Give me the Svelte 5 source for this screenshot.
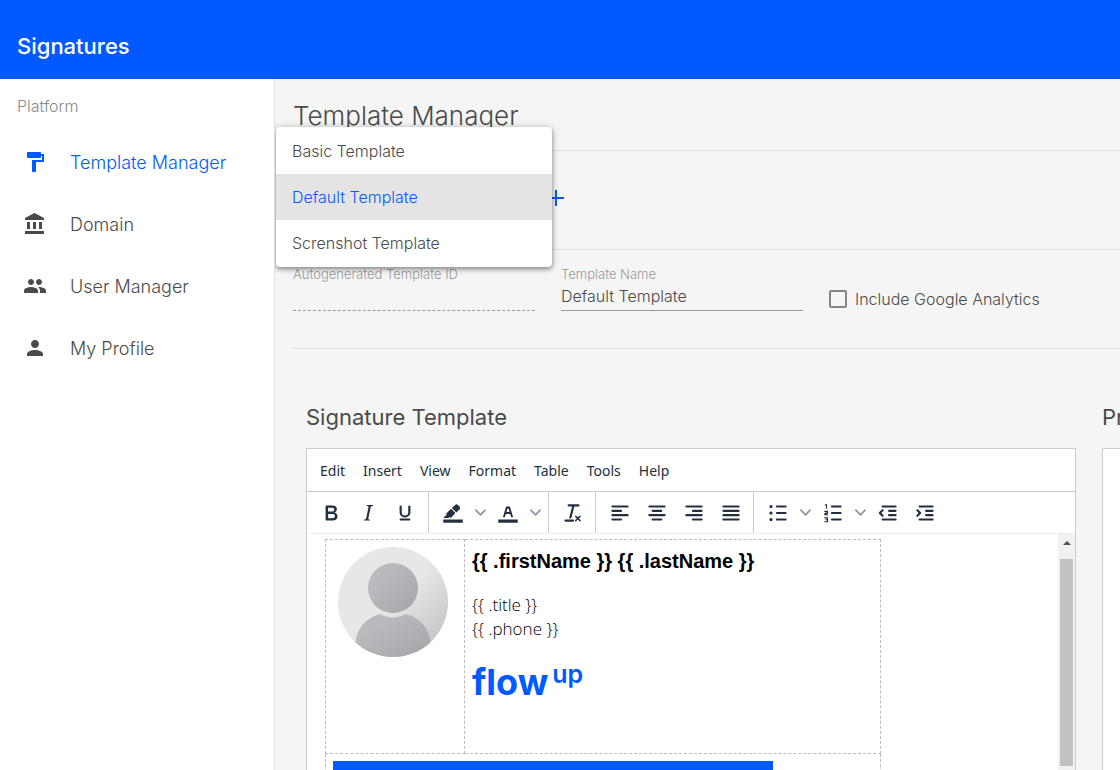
<script lang="ts">
  type Icon = { fill?: string; stroke?: string; bar?: boolean }
  type Tool = { label: string; icon: Icon; split?: boolean }

  const nav = [
    { label: 'Template Manager', icon: 'M18 4V3c0-.55-.45-1-1-1H5c-.55 0-1 .45-1 1v4c0 .55.45 1 1 1h12c.55 0 1-.45 1-1V6h1v4H9v11c0 .55.45 1 1 1h2c.55 0 1-.45 1-1v-9h8V4h-3z' },
    { label: 'Domain', icon: 'M4 10v7h3v-7H4zm6 0v7h3v-7h-3zM2 22h19v-3H2v3zm14-12v7h3v-7h-3zm-4.500-9L2 6v2h19V6l-9.500-5z' },
    { label: 'User Manager', icon: 'M16 11c1.660 0 2.990-1.340 2.990-3S17.660 5 16 5s-3 1.340-3 3 1.340 3 3 3zm-8 0c1.660 0 2.990-1.340 2.990-3S9.660 5 8 5 5 6.340 5 8s1.340 3 3 3zm0 2c-2.330 0-7 1.170-7 3.500V19h14v-2.500c0-2.330-4.670-3.500-7-3.500zm8 0c-.29 0-.62.02-.97.05 1.160.84 1.970 1.970 1.970 3.450V19h6v-2.500c0-2.330-4.670-3.500-7-3.500z' },
    { label: 'My Profile', icon: 'M12 12c2.210 0 4-1.790 4-4s-1.790-4-4-4-4 1.790-4 4 1.790 4 4 4zm0 2c-2.670 0-8 1.340-8 4v2h16v-2c0-2.660-5.330-4-8-4z' },
  ]

  const templates = ['Basic Template', 'Default Template', 'Screnshot Template']
  const menus = ['Edit', 'Insert', 'View', 'Format', 'Table', 'Tools', 'Help']

  const toolGroups: Tool[][] = [
    [
      { label: 'Bold', icon: { fill: 'M7.8 19c-.3 0-.5 0-.6-.2l-.2-.5V5.700c0-.2 0-.4.2-.5l.6-.2h5c1.500 0 2.700.3 3.500 1 .7.6 1.100 1.400 1.100 2.500a3 3 0 0 1-.6 1.900c-.4.6-1 1-1.600 1.200.4.1.9.3 1.300.6s.8.7 1 1.200c.4.4.5 1 .5 1.600 0 1.300-.4 2.300-1.300 3-.8.7-2.100 1-3.800 1H7.800zm5-8.300c.6 0 1.200-.1 1.600-.5.4-.3.6-.7.6-1.300 0-1.100-.8-1.700-2.300-1.700H9.300v3.500h3.400zm.5 6c.7 0 1.300-.1 1.700-.4.4-.4.6-.9.6-1.500s-.2-1-.7-1.400c-.4-.3-1-.4-2-.4H9.400v3.800h4z' } },
      { label: 'Italic', icon: { fill: 'M16.7 4.7l-.1.9h-.3c-.6 0-1 0-1.400.3-.3.3-.4.6-.5 1.100l-2.100 9.800v.6c0 .5.4.8 1.400.8h.2l-.2.8H8l.2-.8h.2c1.100 0 1.800-.5 2-1.500l2-9.800.1-.5c0-.6-.4-.8-1.400-.8h-.3l.2-.9h5.800z' } },
      { label: 'Underline', icon: { stroke: 'M8 6v5.500a4 3.700 0 0 0 8 0V6M8 18h8' } },
    ],
    [
      { label: 'Background color', split: true, icon: { bar: true, fill: 'M7.700 16.700H3l3.300-3.300-.7-.8L10.200 8l4 4.100-4 4.200c-.2.2-.6.2-.8 0l-.6-.7-1.100 1.100zm5-7.500L11 7.400l3-2.900a2 2 0 0 1 2.600 0L18 6c.7.7.7 2 0 2.700l-2.900 2.900-1.800-1.800-.5-.6z' } },
      { label: 'Text color', split: true, icon: { bar: true, fill: 'M8.700 16h-.8a.5.5 0 0 1-.5-.6l2.700-9c.1-.3.3-.4.5-.4h2.800c.2 0 .4.1.5.4l2.700 9a.5.5 0 0 1-.5.6h-.8a.5.5 0 0 1-.4-.4l-.7-2.200c0-.3-.3-.4-.5-.4h-3.400c-.2 0-.4.1-.5.4l-.7 2.200c0 .3-.2.4-.4.4zm2.600-7.600l-.6 2a.5.5 0 0 0 .5.6h1.600a.5.5 0 0 0 .5-.6l-.6-2c0-.3-.3-.4-.5-.4h-.4c-.2 0-.4.1-.5.4z' } },
    ],
    [
      { label: 'Clear formatting', icon: { fill: 'M13.200 6a1 1 0 0 1 0 .2l-2.600 10a1 1 0 0 1-1 .8h-.2a.8.8 0 0 1-.8-1l2.600-10H8a1 1 0 1 1 0-2h9a1 1 0 0 1 0 2h-3.800zM5 18h7a1 1 0 0 1 0 2H5a1 1 0 0 1 0-2zm13 1.500L16.500 18 15 19.500a.7.7 0 0 1-1-1l1.500-1.500-1.500-1.500a.7.7 0 0 1 1-1l1.500 1.500 1.500-1.500a.7.7 0 0 1 1 1L17.500 17l1.500 1.500a.7.7 0 0 1-1 1z' } },
    ],
    [
      { label: 'Align left', icon: { stroke: 'M5 6h14M5 10h8M5 14h14M5 18h8' } },
      { label: 'Align center', icon: { stroke: 'M5 6h14M8 10h8M5 14h14M8 18h8' } },
      { label: 'Align right', icon: { stroke: 'M5 6h14M11 10h8M5 14h14M11 18h8' } },
      { label: 'Justify', icon: { stroke: 'M5 6h14M5 10h14M5 14h14M5 18h14' } },
    ],
    [
      { label: 'Bullet list', split: true, icon: { stroke: 'M11 6h8M11 12h8M11 18h8', fill: 'M4 6a1.500 1.500 0 1 1 3 0a1.500 1.500 0 1 1-3 0zM4 12a1.500 1.500 0 1 1 3 0a1.500 1.500 0 1 1-3 0zM4 18a1.500 1.500 0 1 1 3 0a1.500 1.500 0 1 1-3 0z' } },
      { label: 'Numbered list', split: true, icon: { stroke: 'M11 6h8M11 12h8M11 18h8', fill: 'M4.500 4H6.500v4H5.500V5h-1zM4 10h3.500v2.500L5.500 13.200h2V14H4v-2l2.500-.7V11H4zM4 16h3.500v4.500H4v-1h2.500v-.8H5v-.9h1.500V17H4z' } },
      { label: 'Decrease indent', icon: { stroke: 'M7 6h12M13 10h6M13 14h6M7 18h12M7 9.500L4.500 12 7 14.500' } },
      { label: 'Increase indent', icon: { stroke: 'M7 6h12M13 10h6M13 14h6M7 18h12M5 9.500L7.500 12 5 14.500' } },
    ],
  ]

  let page = $state('Template Manager')
  let selected = $state('Default Template')
  let templateName = $state('Default Template')
  let templateId = $state('')
  let analytics = $state(false)
</script>

<div class="app">
  <header class="topbar">
    <h1>Signatures</h1>
  </header>

  <div class="body">
    <nav class="sidebar" aria-label="Platform">
      <p class="nav-title">Platform</p>
      {#each nav as item}
        <a href="#{item.label}" class="nav-item" class:active={item.label === page} onclick={() => (page = item.label)}>
          <svg viewBox="0 0 24 24" width="24" height="24" aria-hidden="true"><path d={item.icon} /></svg>
          <span>{item.label}</span>
        </a>
      {/each}
    </nav>

    <main>
      <section class="row heading">
        <h2>Template Manager</h2>
      </section>

      <section class="row picker">
        <div class="select-wrap">
          <select bind:value={selected} aria-label="Template">
            {#each templates as name}
              <option value={name}>{name}</option>
            {/each}
          </select>
          <div class="options" role="listbox" aria-label="Templates">
            {#each templates as name}
              <button type="button" role="option" aria-selected={name === selected} class:selected={name === selected} onclick={() => (selected = name)}>{name}</button>
            {/each}
          </div>
        </div>
        <button type="button" class="add" aria-label="Add template">
          <svg viewBox="0 0 24 24" width="24" height="24" aria-hidden="true"><path d="M11 4h2v7h7v2h-7v7h-2v-7H4v-2h7z" /></svg>
        </button>
      </section>

      <section class="row fields">
        <div class="field">
          <label for="template-id">Autogenerated Template ID</label>
          <input id="template-id" class="readonly" type="text" bind:value={templateId} readonly />
        </div>
        <div class="field">
          <label for="template-name">Template Name</label>
          <input id="template-name" type="text" bind:value={templateName} />
        </div>
        <label class="check">
          <input type="checkbox" bind:checked={analytics} />
          <span>Include Google Analytics</span>
        </label>
      </section>

      <div class="panels">
        <section class="panel">
          <h3>Signature Template</h3>
          <div class="editor">
            <div class="menubar">
              {#each menus as menu}
                <button type="button">{menu}</button>
              {/each}
            </div>
            <div class="toolbar">
              {#each toolGroups as group}
                <div class="group">
                  {#each group as tool}
                    <button type="button" class="tool" aria-label={tool.label}>
                      <svg viewBox="0 0 24 24" width="26" height="26" aria-hidden="true">
                        {#if tool.icon.bar}<path d="M3 18h18v3H3z" />{/if}
                        {#if tool.icon.fill}<path fill-rule="evenodd" d={tool.icon.fill} />{/if}
                        {#if tool.icon.stroke}<path class="line" d={tool.icon.stroke} />{/if}
                      </svg>
                    </button>
                    {#if tool.split}
                      <button type="button" class="chevron" aria-label="{tool.label} options">
                        <svg viewBox="0 0 10 10" width="11" height="11" aria-hidden="true"><path d="M8.700 2.200c.3-.3.8-.3 1 0 .4.4.4.9 0 1.200L5.700 7.800c-.3.3-.9.3-1.200 0L.2 3.400a.8.8 0 0 1 0-1.200c.3-.3.8-.3 1.100 0L5 6l3.700-3.800z" /></svg>
                      </button>
                    {/if}
                  {/each}
                </div>
              {/each}
            </div>
            <div class="edit-area">
              <div class="document">
                <table>
                  <tbody>
                    <tr>
                      <td class="photo">
                        <svg viewBox="0 0 110 110" width="110" height="110" role="img" aria-label="Avatar">
                          <defs>
                            <linearGradient id="back" x1="0" y1="0" x2="1" y2="1">
                              <stop offset="0.5" stop-color="#e6e7e8" />
                              <stop offset="0.9" stop-color="#c4c5c8" />
                            </linearGradient>
                            <linearGradient id="person" x1="0" y1="0" x2="1" y2="1">
                              <stop offset="0.3" stop-color="#b9babd" />
                              <stop offset="1" stop-color="#a3a4a8" />
                            </linearGradient>
                            <clipPath id="disc"><circle cx="55" cy="55" r="55" /></clipPath>
                          </defs>
                          <g clip-path="url(#disc)">
                            <rect width="110" height="110" fill="url(#back)" />
                            <circle cx="55" cy="41" r="25" fill="url(#person)" />
                            <path d="M42 67c8 4.500 18 4.500 26 0 15 4 23 15 24.500 28v15h-75V95C19 82 27 71 42 67z" fill="url(#person)" />
                          </g>
                        </svg>
                      </td>
                      <td class="details">
                        <p class="person">{'{{ .firstName }} {{ .lastName }}'}</p>
                        <p class="contact">{'{{ .title }}'}<br />{'{{ .phone }}'}</p>
                        <p class="logo">flow<span>up</span></p>
                      </td>
                    </tr>
                    <tr>
                      <td class="banner" colspan="2"><div></div></td>
                    </tr>
                  </tbody>
                </table>
              </div>
              <div class="scrollbar" aria-hidden="true">
                <div class="arrow"></div>
                <div class="thumb"></div>
              </div>
            </div>
          </div>
        </section>

        <section class="panel">
          <h3>Preview</h3>
          <div class="editor"></div>
        </section>
      </div>
    </main>
  </div>
</div>

<style>
  :global(body) { margin: 0; }
  .app { --blue: #005aff; --ink: #4a4a4a; --rule: #dcdcdc; --tool: #222f3e; display: flex; flex-direction: column; height: 100vh; overflow: hidden; font-family: Inter, "Liberation Sans", sans-serif; font-weight: 300; font-size: 16px; color: var(--ink); }
  .app * { box-sizing: border-box; }
  h1, h2, h3, p { margin: 0; }
  button { padding: 0; border: 0; background: none; font: inherit; color: inherit; cursor: pointer; }
  svg { display: block; fill: currentColor; }

  .topbar { flex: none; padding: 32px 17px 19px; background: var(--blue); color: #fff; }
  h1 { font-size: 22px; line-height: 28px; font-weight: 500; }
  .body { display: flex; flex: 1; min-height: 0; }

  .sidebar { flex: none; width: 275px; padding-top: 17px; border-right: 1px solid #e0e0e0; background: #fff; }
  .nav-title { padding: 0 17px; margin-bottom: 15px; line-height: 20px; color: #8a8a8a; }
  .nav-item { display: flex; align-items: center; gap: 23px; height: 62px; padding: 0 23px; font-size: 18px; color: var(--ink); text-decoration: none; }
  .nav-item.active { color: var(--blue); }

  main { display: flex; flex-direction: column; flex: 1; min-width: 0; padding-left: 18px; overflow: hidden; background: #f5f5f5; }
  .row { flex: none; border-bottom: 1px solid var(--rule); }
  .heading { height: 72px; padding-top: 21px; }
  h2 { font-size: 26px; line-height: 32px; font-weight: 300; }

  .picker { display: flex; align-items: center; gap: 9px; height: 99px; padding-bottom: 4px; }
  .select-wrap { position: relative; width: 242px; }
  select { width: 100%; height: 46px; border: 0; border-bottom: 1px solid #999; background: none; font: inherit; color: inherit; }
  .options { position: absolute; top: -48px; left: -17px; z-index: 2; display: flex; flex-direction: column; width: 276px; padding: 1px 0; border-radius: 4px; background: #fff; overflow: hidden; box-shadow: 0 2px 4px rgba(0, 0, 0, 0.35), 0 1px 8px rgba(0, 0, 0, 0.22); }
  .options button { height: 46px; padding: 0 16px; text-align: left; }
  .options .selected { background: #e4e4e4; color: var(--blue); }
  .add { color: var(--blue); }

  .fields { display: grid; grid-template-columns: 242px 242px 1fr; gap: 26px; align-items: start; height: 99px; padding-top: 16px; }
  .field label { display: block; font-size: 13px; line-height: 16px; color: #999; }
  .field input { display: block; width: 100%; height: 29px; padding: 0; border: 0; border-bottom: 1px solid #999; border-radius: 0; background: none; font: inherit; color: inherit; outline: 0; }
  .field .readonly { border-bottom-style: dashed; }
  .check { display: flex; align-items: center; gap: 8px; padding-top: 23px; line-height: 20px; }
  .check input { appearance: none; width: 18px; height: 18px; margin: 0; border: 2px solid #858585; border-radius: 2px; }

  .panels { display: flex; flex: 1; gap: 26px; min-height: 0; padding: 54px 0 0 13px; }
  .panel { display: flex; flex: 0 0 calc(100% - 44px); flex-direction: column; }
  h3 { margin-bottom: 17px; font-size: 22px; line-height: 28px; font-weight: 400; }
  .editor { display: flex; flex: 1; flex-direction: column; min-height: 0; border: 1px solid #ccc; border-bottom: 0; background: #fff; font-family: "Noto Sans", sans-serif; font-weight: 400; color: var(--tool); }
  .menubar { display: flex; flex: none; gap: 18px; height: 43px; padding: 0 13px; border-bottom: 1px solid #ccc; font-size: 14px; }
  .toolbar { display: flex; flex: none; height: 42px; border-bottom: 1px solid #eee; }
  .group { display: flex; padding: 0 4px 0 5px; border-right: 1px solid #ccc; }
  .group:first-child { padding-right: 5px; }
  .group:last-child { border-right: 0; }
  .tool { display: grid; place-items: center; width: 37px; }
  .chevron { display: grid; place-items: center; width: 18px; color: #8f97a0; }
  .line { fill: none; stroke: currentColor; stroke-width: 2; stroke-linecap: round; stroke-linejoin: round; }

  .edit-area { display: flex; flex: 1; min-height: 0; }
  .document { flex: 1; padding: 5px 18px; overflow: hidden; }
  table { width: 556px; border-collapse: collapse; color: #000; }
  td { padding: 7px; border: 1px dashed #bbb; vertical-align: top; }
  .photo { width: 139px; height: 214px; padding-left: 12px; }
  .person { margin-bottom: 18px; font: bold 20px/28px "Liberation Sans", sans-serif; }
  .contact { margin-bottom: 17px; font: 300 17px/24px "Open Sans", sans-serif; }
  .logo { display: flex; align-items: flex-start; gap: 4px; font: 700 36px/48px Inter, sans-serif; color: var(--blue); }
  .logo span { font-size: 25px; line-height: 32px; font-weight: 600; }
  .banner div { width: 440px; height: 60px; background: var(--blue); }

  .scrollbar { display: flex; flex: none; flex-direction: column; width: 17px; padding: 0 2px 4px; background: #f1f1f1; }
  .arrow { width: 0; margin: 7px auto 14px; border: 4px solid transparent; border-top: 0; border-bottom-color: #505050; }
  .thumb { flex: 1; background: #c1c1c1; }
</style>
